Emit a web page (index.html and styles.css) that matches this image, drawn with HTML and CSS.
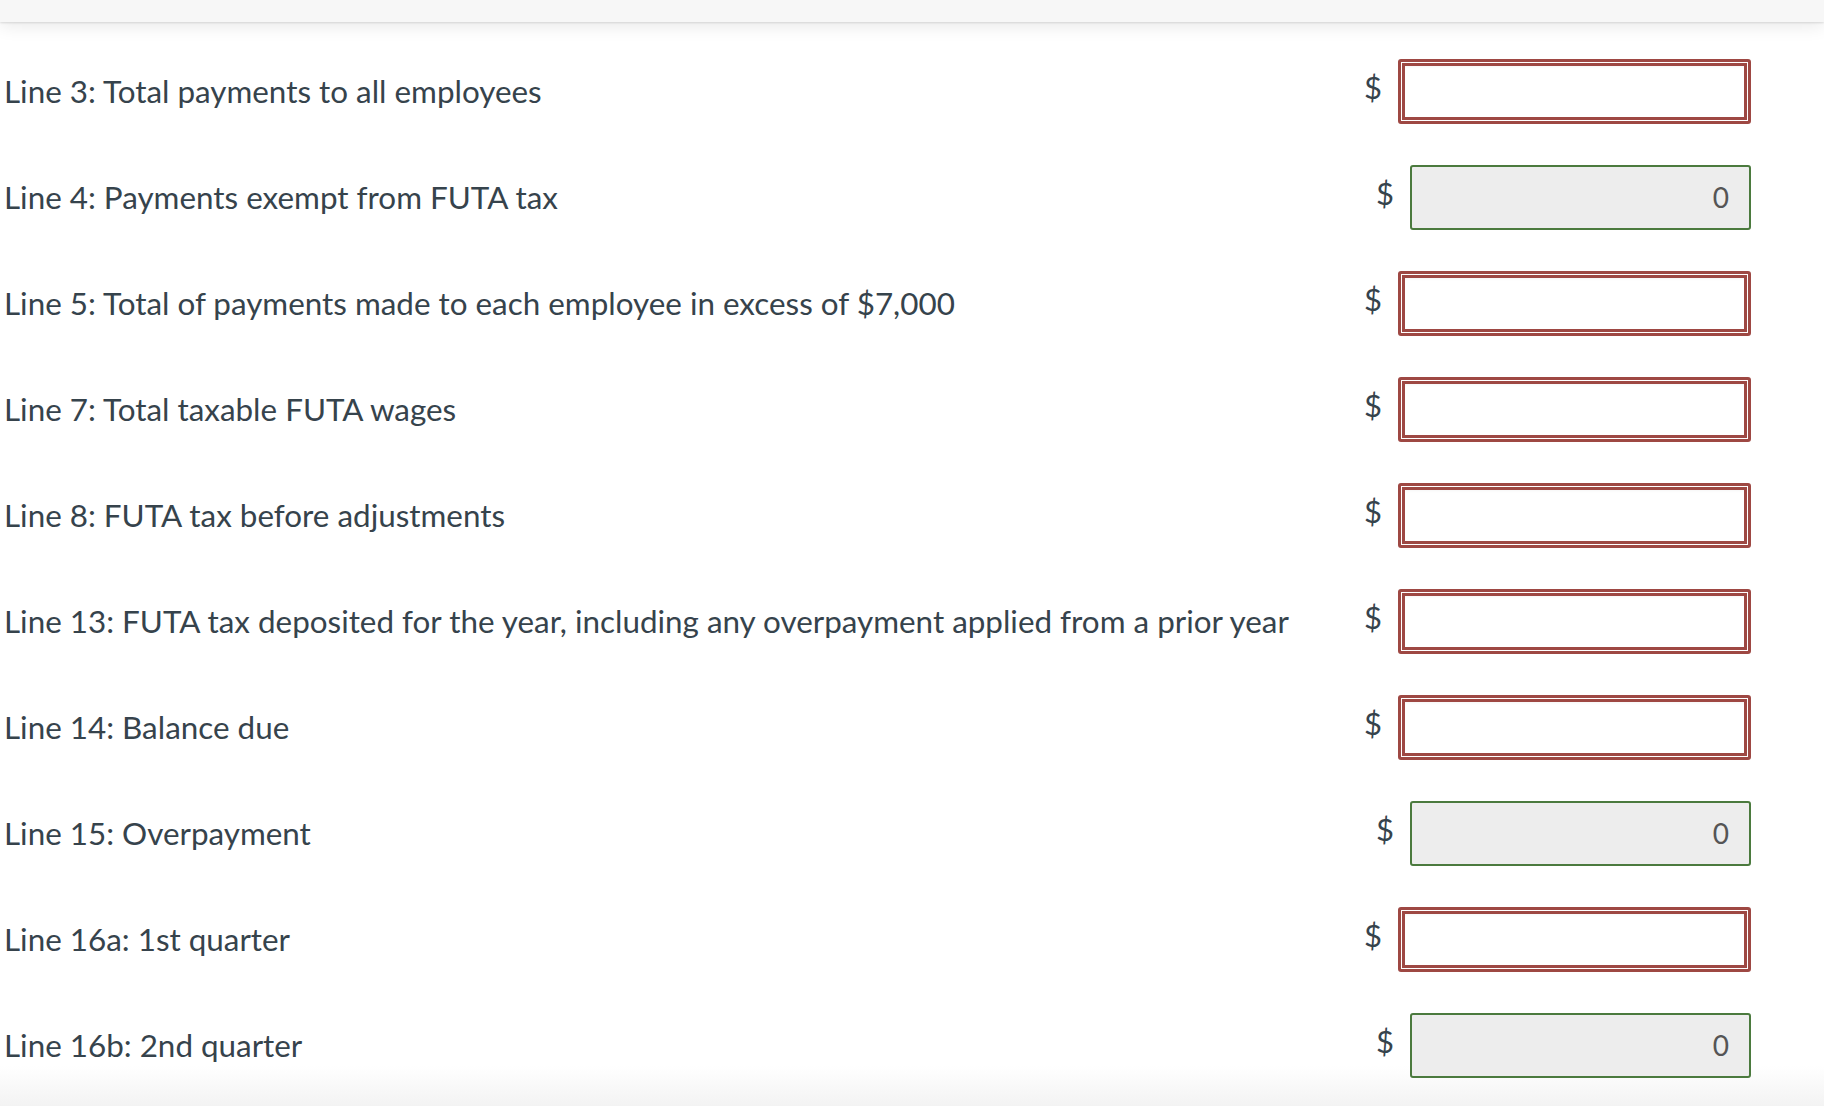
FILE: index.html
```html
<!DOCTYPE html>
<html lang="en">
<head>
<meta charset="utf-8">
<title>FUTA worksheet</title>
<link rel="stylesheet" href="styles.css">
</head>
<body>
<header class="topbar"></header>
<main class="form">
  <div class="row">
    <label class="label">Line 3: Total payments to all employees</label>
    <div class="field"><span class="cur">$</span><span class="box box-error"></span></div>
  </div>
  <div class="row">
    <label class="label">Line 4: Payments exempt from FUTA tax</label>
    <div class="field"><span class="cur">$</span><span class="box box-ok">0</span></div>
  </div>
  <div class="row">
    <label class="label">Line 5: Total of payments made to each employee in excess of $7,000</label>
    <div class="field"><span class="cur">$</span><span class="box box-error"></span></div>
  </div>
  <div class="row">
    <label class="label">Line 7: Total taxable FUTA wages</label>
    <div class="field"><span class="cur">$</span><span class="box box-error"></span></div>
  </div>
  <div class="row">
    <label class="label">Line 8: FUTA tax before adjustments</label>
    <div class="field"><span class="cur">$</span><span class="box box-error"></span></div>
  </div>
  <div class="row">
    <label class="label">Line 13: FUTA tax deposited for the year, including any overpayment applied from a prior year</label>
    <div class="field"><span class="cur">$</span><span class="box box-error"></span></div>
  </div>
  <div class="row">
    <label class="label">Line 14: Balance due</label>
    <div class="field"><span class="cur">$</span><span class="box box-error"></span></div>
  </div>
  <div class="row">
    <label class="label">Line 15: Overpayment</label>
    <div class="field"><span class="cur">$</span><span class="box box-ok">0</span></div>
  </div>
  <div class="row">
    <label class="label">Line 16a: 1st quarter</label>
    <div class="field"><span class="cur">$</span><span class="box box-error"></span></div>
  </div>
  <div class="row">
    <label class="label">Line 16b: 2nd quarter</label>
    <div class="field"><span class="cur">$</span><span class="box box-ok">0</span></div>
  </div>
</main>
</body>
</html>
```

FILE: styles.css
```css
html {
  min-height: 100%;
  background: linear-gradient(to bottom, #ffffff 0, #ffffff calc(100% - 40px), #f3f3f3 100%);
}

body {
  margin: 0;
  font-family: "Lato", "Open Sans", sans-serif;
  color: #2d3b45;
}

.topbar {
  position: relative;
  z-index: 1;
  height: 22px;
  background: #f7f7f7;
  box-shadow: 0 1px 2px rgba(0, 0, 0, 0.12), 0 4px 18px rgba(0, 0, 0, 0.09);
}

.form {
  padding: 16px 73px 0 4px;
}

.row {
  display: flex;
  align-items: center;
  height: 106px;
}

.label {
  flex: 1;
  font-size: 31.4px;
  line-height: 36px;
  color: #36434c;
}

.field {
  display: flex;
  align-items: center;
}

.cur {
  font-size: 31px;
  line-height: 36px;
  margin-right: 16px;
  margin-top: -8px;
  color: #36434c;
}

.box {
  box-sizing: border-box;
  height: 65px;
  border-radius: 3px;
  display: flex;
  align-items: center;
  justify-content: flex-end;
}

.box-error {
  width: 353px;
  background: #ffffff;
  border: 3px solid #9e4843;
  box-shadow: inset 0 0 0 1px #ffffff, inset 0 0 0 4px #9e4843, inset 0 6px 4px -2px rgba(0, 0, 0, 0.06);
}

.box-ok {
  width: 341px;
  background: #ededed;
  border: 2px solid #4b7a3e;
  padding-right: 20px;
  font-size: 28px;
  color: #555555;
}
```
